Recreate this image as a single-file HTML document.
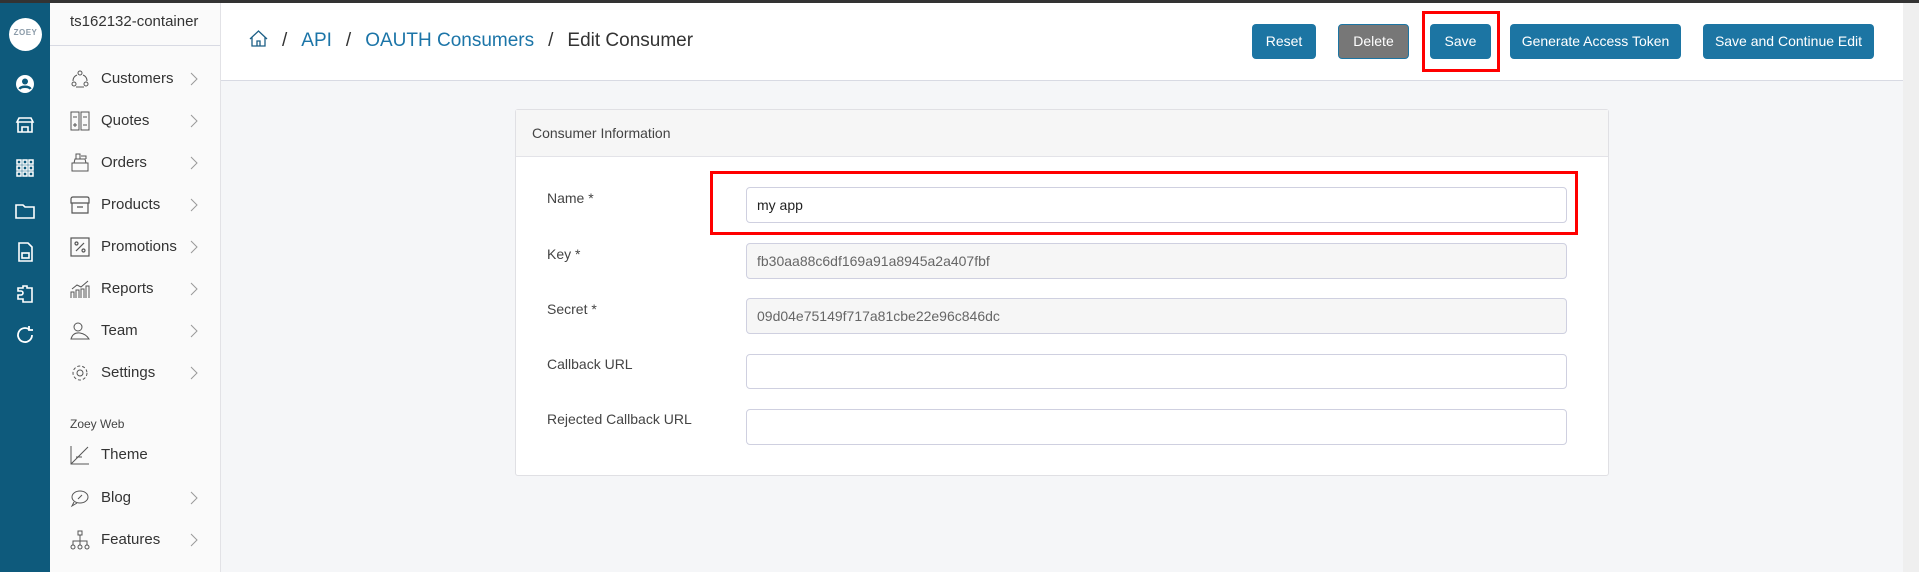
<!DOCTYPE html>
<html><head><meta charset="utf-8"><style>
*{box-sizing:border-box;margin:0;padding:0}
body{width:1919px;height:572px;overflow:hidden;background:#f5f6f8;font-family:"Liberation Sans",sans-serif;position:relative;color:#333}
.top{position:absolute;left:0;top:0;width:1919px;height:3px;background:#333}
.rail{position:absolute;left:0;top:3px;width:50px;height:569px;background:#0e5a7c}
.logo{position:absolute;left:9px;top:15px;width:33px;height:33px;border-radius:50%;background:#fff;font-size:8px;font-weight:bold;color:#8a9aa8;text-align:center;line-height:30px;letter-spacing:.5px}
.ri{position:absolute;left:14px;width:22px;height:22px}
.nav{position:absolute;left:50px;top:3px;width:171px;height:569px;background:#fafafa;border-right:1px solid #e2e2e6}
.nav .hd{height:43px;border-bottom:1px solid #d8dae3;font-size:15px;padding:10px 0 0 20px;color:#333}
.it{position:absolute;left:0;width:170px;height:30px;font-size:15px;color:#333}
.it span{position:absolute;left:51px;top:7px}
.it svg.ic{position:absolute;left:20px;top:6px}
.it svg.ch{position:absolute;left:140px;top:9px}
.head{position:absolute;left:221px;top:3px;width:1682px;height:78px;background:#fff;border-bottom:1px solid #d8dae3}
.bc{position:absolute;left:28px;top:27px;font-size:19px;color:#333;white-space:nowrap}
.bc a{color:#1c75a8}
.bc .s{margin:0 14px}
.btn{position:absolute;top:24px;height:35px;border-radius:4px;background:#1c75a3;color:#fff;font-size:14px;text-align:center;line-height:35px}
.red{position:absolute;border:3px solid #f00}
.scroll{position:absolute;left:1903px;top:3px;width:16px;height:569px;background:#efefef}
.card{position:absolute;left:515px;top:109px;width:1094px;height:367px;background:#fff;border:1px solid #e0e0e4;border-radius:3px}
.ch2{height:47px;background:#f6f6f6;border-bottom:1px solid #e3e3e8;font-size:14px;padding:15px 0 0 16px;color:#444}
.lb{position:absolute;left:31px;font-size:14px;color:#444}
.in{position:absolute;left:230px;width:821px;height:36px;border:1px solid #cfd0e0;border-radius:4px;background:#fff;font-size:14px;padding:9px 0 0 10px;color:#222}
.in.d{background:#f6f6f6;color:#666}
</style></head><body>
<svg width="0" height="0" style="position:absolute"><defs><symbol id="chev" viewBox="0 0 8 14"><path d="M1 1l6 6-6 6" fill="none" stroke="#999" stroke-width="1"/></symbol></defs></svg>
<div class="top"></div>
<div class="rail">
<div class="logo">ZOEY</div>
<svg class="ri" style="top:70px" viewBox="0 0 22 22"><circle cx="11" cy="11" r="9" fill="#fff"/><circle cx="11" cy="8.5" r="3" fill="#0e5a7c"/><path d="M5.5 16c1.5-3 9.5-3 11 0" stroke="#0e5a7c" stroke-width="2.5" fill="none"/></svg>
<svg class="ri" style="top:111px" viewBox="0 0 22 22" fill="none" stroke="#fff" stroke-width="1.6"><path d="M3 8h16l-2-4H5z M4 8v10h14V8 M8 18v-5h6v5"/></svg>
<svg class="ri" style="top:154px" viewBox="0 0 22 22" fill="none" stroke="#fff" stroke-width="1.5"><rect x="3" y="3" width="4" height="4"/><rect x="9" y="3" width="4" height="4"/><rect x="15" y="3" width="4" height="4"/><rect x="3" y="9" width="4" height="4"/><rect x="9" y="9" width="4" height="4"/><rect x="15" y="9" width="4" height="4"/><rect x="3" y="15" width="4" height="4"/><rect x="9" y="15" width="4" height="4"/><rect x="15" y="15" width="4" height="4"/></svg>
<svg class="ri" style="top:197px" viewBox="0 0 22 22" fill="none" stroke="#fff" stroke-width="1.6"><path d="M2 5h7l2 2h9v11H2z"/></svg>
<svg class="ri" style="top:238px" viewBox="0 0 22 22" fill="none" stroke="#fff" stroke-width="1.6"><path d="M5 2h9l4 4v14H5z"/><rect x="8" y="12" width="7" height="5"/></svg>
<svg class="ri" style="top:280px" viewBox="0 0 22 22" fill="none" stroke="#fff" stroke-width="1.6"><path d="M4 12h3a2 2 0 1 0 0-4H4V5h5V3h4v2h5v14H9v-3H4z"/></svg>
<svg class="ri" style="top:321px" viewBox="0 0 22 22" fill="none" stroke="#fff" stroke-width="1.8"><path d="M18 11a7 7 0 1 1-3-5.7"/><path d="M15 2v4h4"/></svg>
</div>
<div class="nav"><div class="hd">ts162132-container</div>
<div class="it" style="top:60px"><svg class="ic" width="20" height="20" viewBox="0 0 20 20" fill="none" stroke="#555" stroke-width="1"><circle cx="10" cy="4" r="2"/><circle cx="4" cy="15" r="2"/><circle cx="16" cy="15" r="2"/><path d="M7 6a6 6 0 0 0-4 6M13 6a6 6 0 0 1 4 6M6 18h8"/></svg><span>Customers</span><svg class="ch" width="8" height="14"><use href="#chev"/></svg></div>
<div class="it" style="top:102px"><svg class="ic" width="20" height="20" viewBox="0 0 20 20" fill="none" stroke="#555" stroke-width="1"><rect x="1" y="1" width="8" height="18"/><rect x="11" y="1" width="8" height="18"/><path d="M3 6h4M3 14h4M5 12v4M13 6h4M13 14h4"/></svg><span>Quotes</span><svg class="ch" width="8" height="14"><use href="#chev"/></svg></div>
<div class="it" style="top:144px"><svg class="ic" width="20" height="20" viewBox="0 0 20 20" fill="none" stroke="#555" stroke-width="1"><path d="M2 10h16v8H2zM4 10l1-4h10l1 4M6 6V1h4v5M11 3h5v3"/></svg><span>Orders</span><svg class="ch" width="8" height="14"><use href="#chev"/></svg></div>
<div class="it" style="top:186px"><svg class="ic" width="20" height="20" viewBox="0 0 20 20" fill="none" stroke="#555" stroke-width="1.2"><path d="M1 8V4q0-2 2-2h14q2 0 2 2v4zM2 8v10h16V8M7 12h6"/></svg><span>Products</span><svg class="ch" width="8" height="14"><use href="#chev"/></svg></div>
<div class="it" style="top:228px"><svg class="ic" width="20" height="20" viewBox="0 0 20 20" fill="none" stroke="#555" stroke-width="1.2"><rect x="1" y="1" width="18" height="18"/><path d="M6 14l8-8"/><circle cx="6.5" cy="6.5" r="1.5"/><circle cx="13.5" cy="13.5" r="1.5"/></svg><span>Promotions</span><svg class="ch" width="8" height="14"><use href="#chev"/></svg></div>
<div class="it" style="top:270px"><svg class="ic" width="20" height="20" viewBox="0 0 20 20" fill="none" stroke="#555" stroke-width="1"><path d="M1 19V13h3v6M6 19v-8h3v8M11 19v-9h3v9M16 19V7h3v12M2 10l5-4 4 2 7-6"/></svg><span>Reports</span><svg class="ch" width="8" height="14"><use href="#chev"/></svg></div>
<div class="it" style="top:312px"><svg class="ic" width="20" height="20" viewBox="0 0 20 20" fill="none" stroke="#555" stroke-width="1"><circle cx="8" cy="6" r="4"/><path d="M1 18q2-7 9-6 6 1 9 6z"/></svg><span>Team</span><svg class="ch" width="8" height="14"><use href="#chev"/></svg></div>
<div class="it" style="top:354px"><svg class="ic" width="20" height="20" viewBox="0 0 20 20" fill="none" stroke="#555" stroke-width="1"><circle cx="10" cy="10" r="3"/><circle cx="10" cy="10" r="7" stroke-dasharray="3 2"/></svg><span>Settings</span><svg class="ch" width="8" height="14"><use href="#chev"/></svg></div>
<div style="position:absolute;left:20px;top:414px;font-size:12px;color:#444">Zoey Web</div>
<div class="it" style="top:436px"><svg class="ic" width="20" height="20" viewBox="0 0 20 20" fill="none" stroke="#555" stroke-width="1"><path d="M1 1v18h18M1 19L18 2M4 16l2-2M6 12h6"/></svg><span>Theme</span></div>
<div class="it" style="top:479px"><svg class="ic" width="20" height="20" viewBox="0 0 20 20" fill="none" stroke="#555" stroke-width="1"><ellipse cx="10" cy="9" rx="8" ry="6"/><path d="M4 14l-2 4 5-3M8 11l4-4"/></svg><span>Blog</span><svg class="ch" width="8" height="14"><use href="#chev"/></svg></div>
<div class="it" style="top:521px"><svg class="ic" width="20" height="20" viewBox="0 0 20 20" fill="none" stroke="#555" stroke-width="1"><rect x="8" y="1" width="4" height="4"/><circle cx="3" cy="17" r="2"/><circle cx="10" cy="17" r="2"/><circle cx="17" cy="17" r="2"/><path d="M10 5v10M3 15v-4h14v4"/></svg><span>Features</span><svg class="ch" width="8" height="14"><use href="#chev"/></svg></div>
</div>
<div class="head">
<div class="bc"><svg width="19" height="17" viewBox="0 0 19 17" fill="none" stroke="#1c5f86" stroke-width="1.3" style="vertical-align:-1px"><path d="M1 9L9.5 1 18 9M3 7v9h13V7M8 16v-5h3v5"/></svg><span class="s">/</span><a>API</a><span class="s">/</span><a>OAUTH Consumers</a><span class="s">/</span>Edit Consumer</div>
</div>
<div class="btn" style="left:1252px;width:64px">Reset</div>
<div class="btn" style="left:1338px;width:71px;background:#777;border:1px solid #1c75a3;line-height:33px">Delete</div>
<div class="btn" style="left:1430px;width:61px">Save</div>
<div class="btn" style="left:1510px;width:171px">Generate Access Token</div>
<div class="btn" style="left:1703px;width:171px">Save and Continue Edit</div>
<div class="red" style="left:1422px;top:11px;width:78px;height:61px"></div>
<div class="scroll"></div>
<div class="card"><div class="ch2">Consumer Information</div>
<div class="lb" style="top:80px">Name *</div><div class="in" style="top:77px">my app</div>
<div class="lb" style="top:136px">Key *</div><div class="in d" style="top:133px">fb30aa88c6df169a91a8945a2a407fbf</div>
<div class="lb" style="top:191px">Secret *</div><div class="in d" style="top:188px">09d04e75149f717a81cbe22e96c846dc</div>
<div class="lb" style="top:246px">Callback URL</div><div class="in" style="top:244px;height:35px"></div>
<div class="lb" style="top:301px">Rejected Callback URL</div><div class="in" style="top:299px"></div>
</div>
<div class="red" style="left:710px;top:171px;width:868px;height:64px"></div>
</body></html>
